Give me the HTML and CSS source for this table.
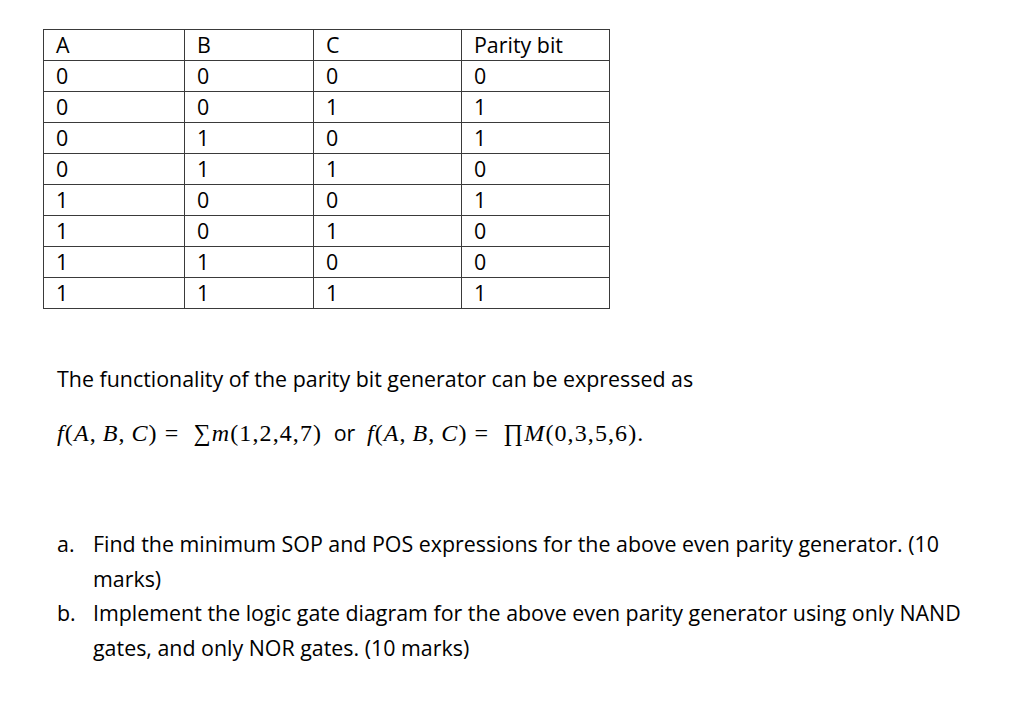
FILE: index.html
```html
<!DOCTYPE html>
<html>
<head>
<meta charset="utf-8">
<link rel="stylesheet" href="styles.css">
</head>
<body>
<div class="page">
  <table class="truth">
    <colgroup><col class="c1"><col class="c2"><col class="c3"><col class="c4"></colgroup>
    <tr><td>A</td><td>B</td><td>C</td><td>Parity bit</td></tr>
    <tr><td>0</td><td>0</td><td>0</td><td>0</td></tr>
    <tr><td>0</td><td>0</td><td>1</td><td>1</td></tr>
    <tr><td>0</td><td>1</td><td>0</td><td>1</td></tr>
    <tr><td>0</td><td>1</td><td>1</td><td>0</td></tr>
    <tr><td>1</td><td>0</td><td>0</td><td>1</td></tr>
    <tr><td>1</td><td>0</td><td>1</td><td>0</td></tr>
    <tr><td>1</td><td>1</td><td>0</td><td>0</td></tr>
    <tr><td>1</td><td>1</td><td>1</td><td>1</td></tr>
  </table>
  <p class="intro">The functionality of the parity bit generator can be expressed as</p>
  <p class="formula"><span class="m"><i>f</i>(<i>A</i>,&thinsp;<i>B</i>,&thinsp;<i>C</i>) = &nbsp;∑<i>m</i>(1,2,4,7)</span> <span class="or">or</span> <span class="m"><i>f</i>(<i>A</i>,&thinsp;<i>B</i>,&thinsp;<i>C</i>) = &nbsp;∏<i>M</i>(0,3,5,6).</span></p>
  <ol class="tasks">
    <li><span class="lbl">a.</span><span class="txt">Find the minimum SOP and POS expressions for the above even parity generator. (10 marks)</span></li>
    <li><span class="lbl">b.</span><span class="txt">Implement the logic gate diagram for the above even parity generator using only NAND gates, and only NOR gates. (10 marks)</span></li>
  </ol>
</div>
</body>
</html>
```
FILE: styles.css
```css
html, body { margin: 0; padding: 0; background: #fff; }
body { font-family: "Open Sans", Lato, sans-serif; color: #000; font-size: 21.4px; }
.page { padding: 29px 0 0 43px; }
.truth { border-collapse: collapse; width: 566px; table-layout: fixed; }
.truth col.c1 { width: 141px; }
.truth col.c2 { width: 129px; }
.truth col.c3 { width: 148px; }
.truth col.c4 { width: 148px; }
.truth td { border: 1px solid #3a3a3a; height: 30px; padding: 0 0 0 12px; line-height: 30px; vertical-align: middle; font-size: 21.4px; }
.intro { margin: 56px 0 0 14px; line-height: 28px; }
.formula { margin: 25px 0 0 14px; line-height: 30px; }
.formula .m { font-family: "Liberation Serif", "DejaVu Serif", serif; font-size: 24px; letter-spacing: 1.1px; }
.formula .or { margin: 0 6px; }
.tasks { list-style: none; margin: 79px 0 0 14px; padding: 0; width: 940px; }
.tasks li { display: flex; line-height: 34.5px; }
.tasks .lbl { flex: 0 0 36px; }
.tasks .txt { flex: 1; }
```
